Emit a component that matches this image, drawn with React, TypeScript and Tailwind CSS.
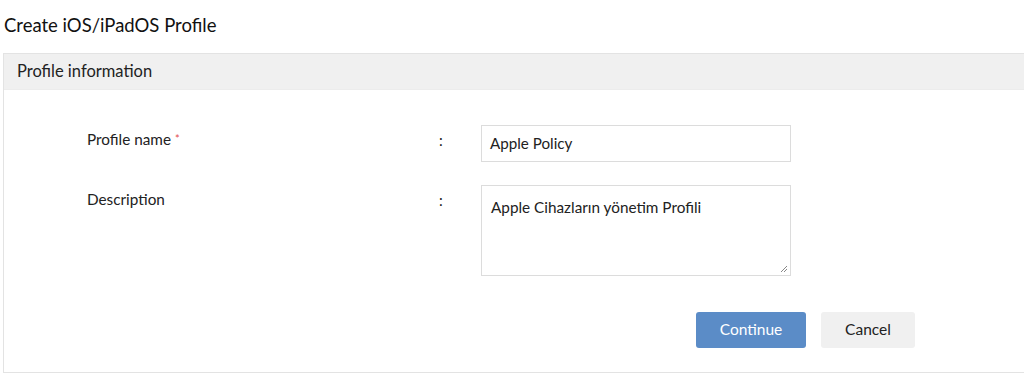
import React from 'react';

export default function App() {
  return (
    <div className="w-[1024px] h-[384px] overflow-hidden bg-white text-[#222] font-['Lato','Noto_Sans',sans-serif]">
      <h1 className="pl-[4px] pt-[14px] text-[18.5px] leading-[23px] text-[#111]">Create iOS/iPadOS Profile</h1>

      <div className="ml-[3px] mt-[16px] w-[1040px] h-[320px] border border-[#e3e3e3]">
        <div className="h-[36px] bg-[#f0f0f0] border-b border-[#ececec] pl-[13px] flex items-center text-[16.5px] text-[#222]">
          Profile information
        </div>

        <div className="pl-[83px] pt-[35px]">
          <div className="flex">
            <div className="w-[352px] pt-[4px] text-[15.3px] leading-[20px]">
              Profile name <span className="text-[#e24b4b] text-[11px] align-top">*</span>
            </div>
            <div className="w-[42px] pt-[5px] text-[15px] leading-[20px]">:</div>
            <div className="w-[310px] h-[37px] border border-[#dcdcdc] px-[8px] flex items-center text-[15.2px]">Apple Policy</div>
          </div>

          <div className="flex mt-[23px]">
            <div className="w-[352px] pt-[4px] text-[15.3px] leading-[20px]">Description</div>
            <div className="w-[42px] pt-[5px] text-[15px] leading-[20px]">:</div>
            <div className="relative w-[310px] h-[91px] border border-[#dcdcdc] px-[9px] pt-[11px] text-[15.3px] leading-[20px]">
              Apple Cihazların yönetim Profili
              <svg className="absolute right-[2px] bottom-[2px]" width="8" height="8" viewBox="0 0 8 8">
                <path d="M7 1 L1 7 M7 4 L4 7" stroke="#888" strokeWidth="1" />
              </svg>
            </div>
          </div>

          <div className="flex pl-[609px] mt-[36px] gap-[15px]">
            <button className="w-[110px] h-[36px] rounded-[3px] bg-[#5b8cc7] text-white text-[15.5px]">Continue</button>
            <button className="w-[94px] h-[36px] rounded-[3px] bg-[#f0f0f0] text-[#222] text-[15.5px]">Cancel</button>
          </div>
        </div>
      </div>
    </div>
  );
}
